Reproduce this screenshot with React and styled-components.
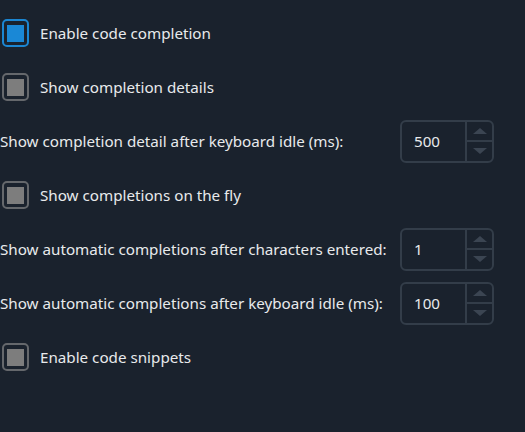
import React from 'react';
import styled, { createGlobalStyle } from 'styled-components';

const GlobalStyle = createGlobalStyle`
  html, body {
    margin: 0;
    padding: 0;
    background: #1a222d;
  }
  body {
    font-family: "Noto Sans", "Open Sans", sans-serif;
  }
`;

const Page = styled.div`
  width: 525px;
  height: 432px;
  box-sizing: border-box;
  padding-top: 6px;
  background: #1a222d;
  display: flex;
  flex-direction: column;
`;

const Row = styled.div`
  height: 54px;
  display: flex;
  align-items: center;
`;

const CheckBox = styled.span`
  width: 23px;
  height: 24px;
  margin-left: 2px;
  border: 2px solid ${(p) => (p.checked ? '#1b86d2' : '#65686c')};
  border-radius: 5px;
  display: flex;
  align-items: center;
  justify-content: center;
  flex-shrink: 0;

  &::after {
    content: '';
    width: 17px;
    height: 17px;
    background: ${(p) => (p.checked ? '#1a88d6' : '#7d7d7d')};
  }
`;

const Label = styled.span`
  color: #e8eaec;
  font-size: 15.2px;
  white-space: nowrap;
`;

const CheckLabel = styled(Label)`
  margin-left: 11px;
`;

const FieldLabel = styled(Label)`
  width: 400px;
`;

const Spin = styled.div`
  width: 90px;
  height: 39px;
  border: 2px solid #333d49;
  border-radius: 6px;
  display: flex;
`;

const SpinValue = styled.div`
  flex: 1;
  display: flex;
  align-items: center;
  padding-left: 12px;
  color: #e8eaec;
  font-size: 15.2px;
`;

const SpinButtons = styled.div`
  width: 25px;
  border-left: 2px solid #333d49;
  display: flex;
  flex-direction: column;
`;

const SpinButton = styled.div`
  flex: 1;
  display: flex;
  align-items: center;
  justify-content: center;
  border-top: ${(p) => (p.down ? '2px solid #333d49' : 'none')};

  &::after {
    content: '';
    width: 0;
    height: 0;
    border-left: 7px solid transparent;
    border-right: 7px solid transparent;
    ${(p) =>
      p.down ? 'border-top: 6px solid #3b4552;' : 'border-bottom: 6px solid #3b4552;'}
  }
`;

const CheckRow = ({ checked, children }) => (
  <Row>
    <CheckBox checked={checked} />
    <CheckLabel>{children}</CheckLabel>
  </Row>
);

const SpinRow = ({ label, value }) => (
  <Row>
    <FieldLabel>{label}</FieldLabel>
    <Spin>
      <SpinValue>{value}</SpinValue>
      <SpinButtons>
        <SpinButton />
        <SpinButton down />
      </SpinButtons>
    </Spin>
  </Row>
);

const App = () => (
  <>
    <GlobalStyle />
    <Page>
      <CheckRow checked>Enable code completion</CheckRow>
      <CheckRow>Show completion details</CheckRow>
      <SpinRow label="Show completion detail after keyboard idle (ms):" value="500" />
      <CheckRow>Show completions on the fly</CheckRow>
      <SpinRow label="Show automatic completions after characters entered:" value="1" />
      <SpinRow label="Show automatic completions after keyboard idle (ms):" value="100" />
      <CheckRow>Enable code snippets</CheckRow>
    </Page>
  </>
);

export default App;
